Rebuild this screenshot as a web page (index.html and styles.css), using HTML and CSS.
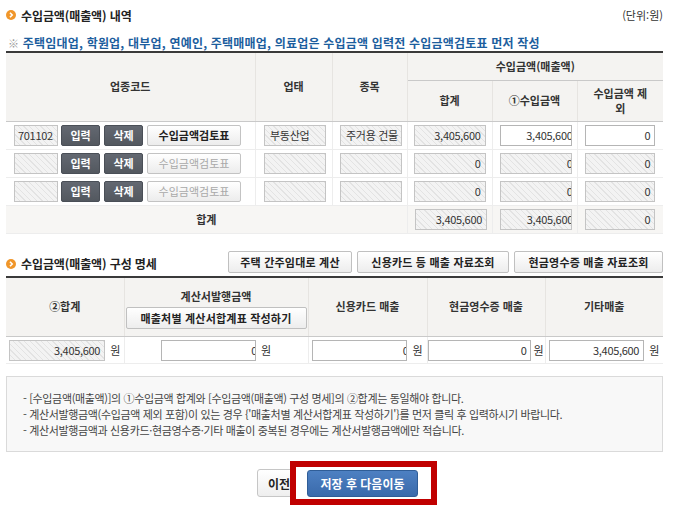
FILE: index.html
```html
<!DOCTYPE html>
<html lang="ko">
<head>
<meta charset="utf-8">
<title>수입금액(매출액) 내역</title>
<link rel="stylesheet" href="styles.css">
</head>
<body>
<div class="page">
  <div class="title-row">
    <h2 class="sec-title"><span class="bullet"><svg viewBox="0 0 10 10" width="10" height="10"><circle cx="5" cy="5" r="5" fill="#f0962a"/><path d="M4 2.8 L6.2 5 L4 7.2" fill="none" stroke="#fff" stroke-width="1.6"/></svg></span>수입금액(매출액) 내역</h2>
    <span class="unit">(단위:원)</span>
  </div>
  <p class="notice"><span class="mark">※</span> 주택임대업, 학원업, 대부업, 연예인, 주택매매업, 의료업은 수입금액 입력전 수입금액검토표 먼저 작성</p>

  <table class="grid t1">
    <colgroup><col class="c1"><col class="c2"><col class="c3"><col class="c4"><col class="c5"><col class="c6"></colgroup>
    <thead>
      <tr class="hr1"><th rowspan="2">업종코드</th><th rowspan="2">업태</th><th rowspan="2">종목</th><th colspan="3">수입금액(매출액)</th></tr>
      <tr class="hr2"><th>합계</th><th>①수입금액</th><th>수입금액 제<br>외</th></tr>
    </thead>
    <tbody>
      <tr>
        <td><div class="code-wrap"><span class="field ro fcode">701102</span><button class="btn-dark">입력</button><button class="btn-dark">삭제</button><button class="btn-light">수입금액검토표</button></div></td>
        <td><span class="field ro f62 left">부동산업</span></td>
        <td><span class="field ro f62 left">주거용 건물</span></td>
        <td><span class="field ro f72">3,405,600</span></td>
        <td><span class="field f72 clip"><span>3,405,600</span></span></td>
        <td><span class="field f70">0</span></td>
      </tr>
      <tr>
        <td><div class="code-wrap"><span class="field ro fcode"></span><button class="btn-dark">입력</button><button class="btn-dark">삭제</button><button class="btn-light off">수입금액검토표</button></div></td>
        <td><span class="field ro f62"></span></td>
        <td><span class="field ro f62"></span></td>
        <td><span class="field ro f72">0</span></td>
        <td><span class="field ro f72 clip"><span>0</span></span></td>
        <td><span class="field ro f70">0</span></td>
      </tr>
      <tr>
        <td><div class="code-wrap"><span class="field ro fcode"></span><button class="btn-dark">입력</button><button class="btn-dark">삭제</button><button class="btn-light off">수입금액검토표</button></div></td>
        <td><span class="field ro f62"></span></td>
        <td><span class="field ro f62"></span></td>
        <td><span class="field ro f72">0</span></td>
        <td><span class="field ro f72 clip"><span>0</span></span></td>
        <td><span class="field ro f70">0</span></td>
      </tr>
      <tr class="total">
        <th colspan="3" class="total-label">합계</th>
        <td><span class="field ro f72">3,405,600</span></td>
        <td><span class="field ro f72 clip"><span>3,405,600</span></span></td>
        <td><span class="field ro f70">0</span></td>
      </tr>
    </tbody>
  </table>

  <div class="sec2-row">
    <h2 class="sec-title"><span class="bullet"><svg viewBox="0 0 10 10" width="10" height="10"><circle cx="5" cy="5" r="5" fill="#f0962a"/><path d="M4 2.8 L6.2 5 L4 7.2" fill="none" stroke="#fff" stroke-width="1.6"/></svg></span>수입금액(매출액) 구성 명세</h2>
    <div class="sec2-btns">
      <button class="btn-grey">주택 간주임대로 계산</button>
      <button class="btn-grey">신용카드 등 매출 자료조회</button>
      <button class="btn-grey">현금영수증 매출 자료조회</button>
    </div>
  </div>

  <table class="grid t2">
    <colgroup><col class="d1"><col class="d2"><col class="d3"><col class="d4"><col class="d5"></colgroup>
    <thead>
      <tr class="hr3">
        <th>②합계</th>
        <th><div class="th-stack">계산서발행금액<button class="btn-grey wide">매출처별 계산서합계표 작성하기</button></div></th>
        <th>신용카드 매출</th>
        <th>현금영수증 매출</th>
        <th>기타매출</th>
      </tr>
    </thead>
    <tbody>
      <tr>
        <td><div class="amt"><span class="field ro f96">3,405,600</span><span class="won">원</span></div></td>
        <td><div class="amt"><span class="field f95 clip"><span>0</span></span><span class="won">원</span></div></td>
        <td><div class="amt"><span class="field f95 clip"><span>0</span></span><span class="won">원</span></div></td>
        <td><div class="amt tight"><span class="field f103">0</span><span class="won">원</span></div></td>
        <td><div class="amt"><span class="field f95">3,405,600</span><span class="won">원</span></div></td>
      </tr>
    </tbody>
  </table>

  <div class="notes">
    <p>- [수입금액(매출액)]의 ①수입금액 합계와 [수입금액(매출액) 구성 명세]의 ②합계는 동일해야 합니다.</p>
    <p>- 계산서발행금액(수입금액 제외 포함)이 있는 경우 {'매출처별 계산서합계표 작성하기'}를 먼저 클릭 후 입력하시기 바랍니다.</p>
    <p>- 계산서발행금액과 신용카드·현금영수증·기타 매출이 중복된 경우에는 계산서발행금액에만 적습니다.</p>
  </div>

  <div class="actions">
    <button class="btn-prev">이전</button>
    <div class="save-wrap">
      <span class="highlight"></span>
      <button class="btn-save">저장 후 다음이동</button>
    </div>
  </div>
</div>
</body>
</html>
```

FILE: styles.css
```css
* { box-sizing: border-box; }
html, body { height: 100%; overflow: hidden; }
body {
  margin: 0;
  background: #fff;
  font-family: "Noto Sans CJK KR", "Noto Sans", "Liberation Sans", sans-serif;
  font-size: 11px;
  color: #333;
}
.page {
  width: 673px;
  padding: 4px 10px 0 6px;
}
.title-row {
  display: flex;
  justify-content: space-between;
  align-items: center;
  height: 22px;
}
.sec-title {
  margin: 0;
  display: flex;
  align-items: center;
  font-size: 12px;
  font-weight: 700;
  color: #222;
  letter-spacing: -0.1px;
}
.bullet {
  display: inline-flex;
  width: 10px;
  height: 10px;
  margin-right: 5px;
}
.unit {
  font-size: 11px;
  color: #333;
}
.notice {
  margin: 8px 0 0 2px;
  height: 17px;
  line-height: 17px;
  font-size: 12px;
  font-weight: 700;
  color: #1c5e9e;
  letter-spacing: 0.2px;
}
.notice .mark {
  color: #999;
  font-weight: 400;
  font-size: 11px;
}

/* tables */
.grid {
  width: 657px;
  border-collapse: collapse;
  table-layout: fixed;
  border-top: 2px solid #3a3a3a;
}
.grid th {
  background: #f4f3f1;
  font-weight: 700;
  color: #333;
  font-size: 11px;
  text-align: center;
  border: 1px solid #e6e4e1;
  padding: 0;
  line-height: 15px;
}
.grid thead tr:last-child th,
.grid thead th[rowspan] { border-bottom: 1px solid #c9c9c9; }
.grid td {
  border: 1px solid #ededed;
  padding: 0;
  text-align: center;
  height: 28px;
}
.grid tr > :first-child { border-left: none; }
.grid tr > :last-child { border-right: none; }

.t1 .c1 { width: 249px; }
.t1 .c2 { width: 77px; }
.t1 .c3 { width: 75px; }
.t1 .c4 { width: 85px; }
.t1 .c5 { width: 85px; }
.t1 .c6 { width: 86px; }
.t1 .hr1 th { height: 28px; }
.t1 .hr1 th[colspan] { border-bottom: 1px solid #c9c9c9; }
.t1 .hr2 th { height: 41px; }
.t1 .total td, .t1 .total th { background: #f7f6f4; height: 28px; }
.t1 .total th { border-color: #ededed; }

.code-wrap {
  display: flex;
  align-items: center;
  padding-left: 8px;
}
.field {
  display: inline-block;
  height: 21px;
  line-height: 19px;
  border: 1px solid #b5b5b5;
  background: #fff;
  font-size: 11px;
  color: #333;
  text-align: right;
  padding: 0 4px;
  vertical-align: middle;
  white-space: nowrap;
  overflow: hidden;
  letter-spacing: -0.3px;
}
.field.left { text-align: left; padding-left: 5px; }
.field.ro {
  border-color: #c4c4c4;
  background: repeating-linear-gradient(45deg, #f3f3f3 0 3px, #e3e3e3 3px 4px);
}
.field.clip { padding-right: 0; }
.field.clip > span { display: inline-block; margin-right: -2px; }
.fcode { width: 44px; text-align: left; padding-left: 3px; }
.f62 { width: 62px; }
.f72 { width: 72px; }
.f70 { width: 70px; }
.f96 { width: 96px; }
.f95 { width: 95px; }
.f103 { width: 103px; }
.t1 td:nth-child(2) .field { margin-left: 3px; }
.t1 td:nth-child(3) .field { margin-left: 3px; }
.t1 td:nth-child(5) .field { margin-left: 2px; }

button {
  font-family: inherit;
  cursor: pointer;
}
.btn-dark {
  height: 21px;
  width: 39px;
  margin-left: 4px;
  border: 1px solid #4a4f57;
  border-radius: 2px;
  background: linear-gradient(#636871, #53585f);
  color: #fff;
  font-size: 11px;
  font-weight: 700;
  padding: 0;
}
.code-wrap .btn-dark:first-of-type { margin-left: 3px; }
.btn-light {
  height: 21px;
  width: 94px;
  margin-left: 4px;
  border: 1px solid #c3c3c3;
  border-radius: 2px;
  background: linear-gradient(#ffffff, #ececec);
  color: #222;
  font-size: 11px;
  font-weight: 700;
  padding: 0;
}
.btn-light.off { color: #a9a9a9; font-weight: 400; }

.sec2-row {
  display: flex;
  justify-content: space-between;
  align-items: center;
  margin-top: 15px;
  height: 26px;
}
.sec2-row .sec-title { margin-top: 4px; }
.sec2-btns { display: flex; gap: 5px; }
.btn-grey {
  height: 22px;
  padding: 0 7px;
  border: 1px solid #c0c0c0;
  border-radius: 2px;
  background: linear-gradient(#ffffff, #ededed);
  color: #222;
  font-size: 11px;
  font-weight: 700;
  letter-spacing: 0.2px;
}
.sec2-btns .btn-grey:nth-child(1) { width: 124px; }
.sec2-btns .btn-grey:nth-child(2) { width: 152px; }
.sec2-btns .btn-grey:nth-child(3) { width: 149px; }

.t2 { margin-top: 1px; }
.t2 .d1 { width: 118px; }
.t2 .d2 { width: 184px; }
.t2 .d3 { width: 119px; }
.t2 .d4 { width: 118px; }
.t2 .d5 { width: 118px; }
.t2 .hr3 th { height: 60px; }
.th-stack {
  display: flex;
  flex-direction: column;
  align-items: center;
  gap: 3px;
  padding-top: 4px;
}
.btn-grey.wide { width: 181px; height: 22px; padding: 0; }
.t2 td { height: 27px; }
.amt {
  display: flex;
  justify-content: center;
  align-items: center;
  gap: 5px;
}
.amt.tight { gap: 2px; }
.won { font-size: 11px; color: #333; }

.notes {
  margin-top: 12px;
  border: 1px solid #dadada;
  background: #f8f8f8;
  padding: 13px 16px 14px;
  height: 76px;
}
.notes p {
  margin: 0;
  font-size: 11px;
  line-height: 16px;
  color: #444;
  letter-spacing: -0.35px;
}

.actions {
  display: flex;
  justify-content: center;
  align-items: flex-start;
  gap: 4px;
  margin-top: 17px;
  padding-left: 6px;
}
.btn-prev {
  height: 28px;
  width: 46px;
  border: 1px solid #c6c6c6;
  border-radius: 3px;
  background: linear-gradient(#ffffff, #eeeeee);
  color: #222;
  font-size: 12px;
  font-weight: 700;
  text-align: left;
  padding: 0 0 0 10px;
}
.save-wrap { position: relative; margin-top: 1px; height: 27px; }
.highlight {
  position: absolute;
  left: -17px;
  width: 147px;
  top: -9px;
  height: 44px;
  border: 6px solid #c00000;
  background: #fff;
}
.btn-save {
  position: relative;
  height: 27px;
  width: 111px;
  border: 1px solid #2f5d97;
  border-radius: 3px;
  background: linear-gradient(#4d80c2, #3a6aab);
  color: #fff;
  font-size: 12px;
  font-weight: 700;
  padding: 0;
  display: block;
}
```
